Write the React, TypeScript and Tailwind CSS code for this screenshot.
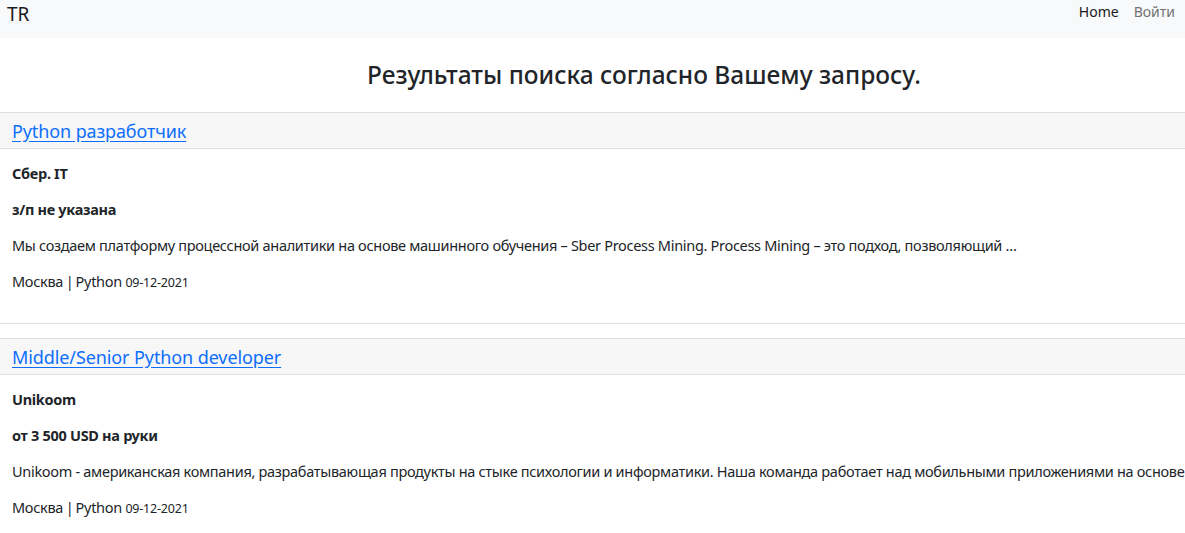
import React from "react";

const font = { fontFamily: '"Noto Sans", "Open Sans", sans-serif' };

type Job = {
  title: string;
  company: string;
  salary: string;
  description: string;
  place: string;
  date: string;
};

const jobs: Job[] = [
  {
    title: "Python разработчик",
    company: "Сбер. IT",
    salary: "з/п не указана",
    description:
      "Мы создаем платформу процессной аналитики на основе машинного обучения – Sber Process Mining. Process Mining – это подход, позволяющий …",
    place: "Москва | Python",
    date: "09-12-2021",
  },
  {
    title: "Middle/Senior Python developer",
    company: "Unikoom",
    salary: "от 3 500 USD на руки",
    description:
      "Unikoom - американская компания, разрабатывающая продукты на стыке психологии и информатики. Наша команда работает над мобильными приложениями на основе …",
    place: "Москва | Python",
    date: "09-12-2021",
  },
];

function JobCard({ job }: { job: Job }) {
  return (
    <div className="border-y border-[#dfdfdf] mb-[14px] bg-white">
      <div className="h-[36px] flex items-center px-3 bg-[#f7f7f7] border-b border-[#dfdfdf]">
        <a
          href="#"
          className="text-[18px] leading-[22px] text-[#0d6efd] underline underline-offset-[3px] tracking-[-0.1px]"
        >
          {job.title}
        </a>
      </div>
      <div className="pt-[12px] pb-4 px-3 text-[14.5px] leading-[24px] text-[#212529] whitespace-nowrap overflow-hidden">
        <div className="font-bold mb-3 tracking-[-0.3px]">{job.company}</div>
        <div className="font-bold mb-3 tracking-[-0.3px]">{job.salary}</div>
        <div className="mb-3 tracking-[-0.3px]">{job.description}</div>
        <div className="mb-3 tracking-[-0.3px]">
          Москва<span className="tracking-[-1px]"> | </span>Python{" "}
          <span className="text-[12.5px] tracking-[-0.2px]">{job.date}</span>
        </div>
      </div>
    </div>
  );
}

export default function App() {
  return (
    <div className="w-[1185px] h-[533px] overflow-hidden bg-white text-[#212529]" style={font}>
      <nav className="h-[38px] bg-[#f8f9fa] flex items-start justify-between pl-[7px] pr-[10px]">
        <a href="#" className="text-[19px] leading-[28px] text-[#1a1a1a]">
          TR
        </a>
        <div className="flex gap-[15px] text-[14px] leading-[24px]">
          <a href="#" className="text-[#1a1a1a]">
            Home
          </a>
          <a href="#" className="text-[#737373]">
            Войти
          </a>
        </div>
      </nav>
      <h1 className="text-center pl-[103px] text-[24.5px] leading-[30px] font-medium pt-[22px] pb-[22px] text-[#212529]">
        Результаты поиска согласно Вашему запросу.
      </h1>
      {jobs.map((j) => (
        <JobCard key={j.title} job={j} />
      ))}
    </div>
  );
}
